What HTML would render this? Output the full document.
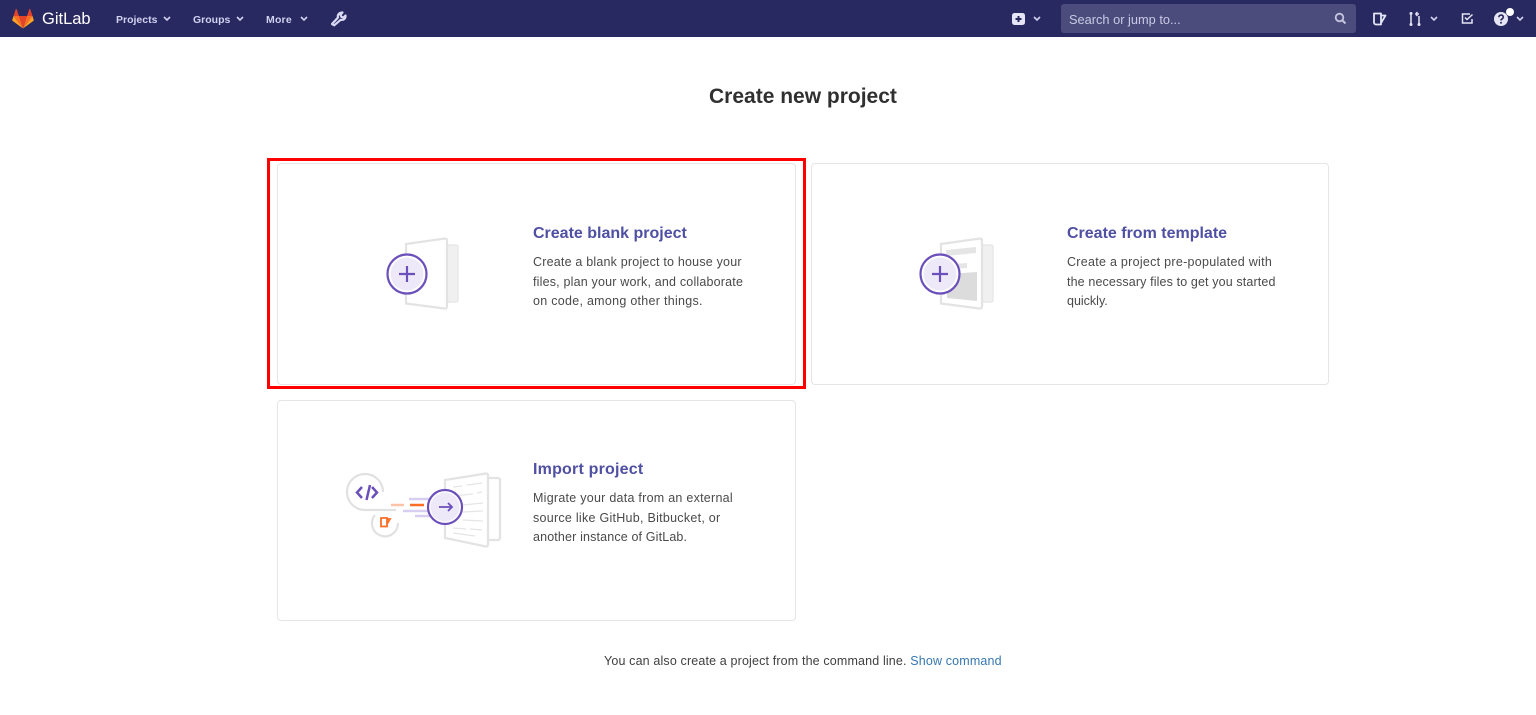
<!DOCTYPE html>
<html><head><meta charset="utf-8"><style>
html,body{margin:0;padding:0;width:1536px;height:715px;overflow:hidden;background:#fff;font-family:"Liberation Sans",sans-serif;color:#2e2e2e}
.a{position:absolute;white-space:nowrap}
#nav{position:absolute;left:0;top:0;width:1536px;height:37px;background:#292961}
.n{font-size:10.5px;font-weight:700;color:#d1d1f0;top:13px;line-height:14px}
.card{position:absolute;box-sizing:border-box;width:519px;height:222px;border:1px solid #e5e5e5;border-radius:4px;background:#fff}
.t{font-size:16px;font-weight:700;color:#4f4fa3;line-height:20px}
.d{font-size:12.5px;color:#4a4a4a;line-height:19.5px}
svg{position:absolute;overflow:visible}
</style></head><body>
<div id="nav"></div>
<svg style="left:12px;top:8px" width="22" height="21" viewBox="0 0 22 21"><path d="M11 20.5L15 8H7z" fill="#e24329"/><path d="M11 20.5L7 8H1.5z" fill="#fc6d26"/><path d="M1.5 8L.3 12c-.1.4 0 .7.3.9L11 20.5z" fill="#fca326"/><path d="M1.5 8H7L4.6 1c-.1-.4-.6-.4-.8 0z" fill="#e24329"/><path d="M11 20.5L15 8h5.5z" fill="#fc6d26"/><path d="M20.5 8l1.2 4c.1.4 0 .7-.3.9L11 20.5z" fill="#fca326"/><path d="M20.5 8H15l2.4-7c.1-.4.6-.4.8 0z" fill="#e24329"/></svg>
<div class="a" style="left:42px;top:10px;font-size:16.5px;line-height:18px;color:#fff">GitLab</div>
<div class="a n" style="left:116px">Projects</div>
<svg style="left:163px;top:16px" width="8" height="6"><path d="M1 1l3 3 3-3" fill="none" stroke="#d1d1f0" stroke-width="1.6"/></svg>
<div class="a n" style="left:193px">Groups</div>
<svg style="left:236px;top:16px" width="8" height="6"><path d="M1 1l3 3 3-3" fill="none" stroke="#d1d1f0" stroke-width="1.6"/></svg>
<div class="a n" style="left:266px;letter-spacing:.2px">More</div>
<svg style="left:300px;top:16px" width="8" height="6"><path d="M1 1l3 3 3-3" fill="none" stroke="#d1d1f0" stroke-width="1.6"/></svg>
<svg style="left:330px;top:11px" width="16" height="15" viewBox="0 0 16 15"><path d="M2 13l6-6.500c-.8-2.500 1-5 4.500-5l-2 2.500 1 2 2 .5 2-2c.3 3-2 5-4.800 4.300l-6.500 5.500z" fill="none" stroke="#d9d9f2" stroke-width="2.200" stroke-linejoin="round"/></svg>

<svg style="left:1012px;top:13px" width="13" height="12"><rect width="13" height="12" rx="2.500" fill="#e5e5f5"/><path d="M6.500 3v6M3.500 6h6" stroke="#292961" stroke-width="2"/></svg>
<svg style="left:1033px;top:16px" width="8" height="6"><path d="M1 1l3 3 3-3" fill="none" stroke="#d1d1f0" stroke-width="1.600"/></svg>
<div class="a" style="left:1061px;top:4px;width:295px;height:29px;background:#4c4c7c;border-radius:3px"></div>
<div class="a" style="left:1069px;top:12px;font-size:12.800px;line-height:16px;color:#c9c9e5">Search or jump to...</div>
<svg style="left:1334px;top:12px" width="13" height="13"><circle cx="5.500" cy="5.500" r="3.800" fill="none" stroke="#c4c4df" stroke-width="1.800"/><path d="M8.500 8.500l3 3" stroke="#c4c4df" stroke-width="2"/></svg>
<svg style="left:1373px;top:12px" width="14" height="14"><path d="M1 1.500h7v11H3a2 2 0 0 1-2-2zM8 3.500h4.500L8 11" fill="none" stroke="#e5e5f5" stroke-width="1.800" stroke-linejoin="round"/></svg>
<svg style="left:1408px;top:11px" width="16" height="16"><path d="M3 4v9M11 5v8M11 3H8" fill="none" stroke="#e5e5f5" stroke-width="1.500"/><path d="M7.500 3l2-2M7.500 3l2 2" stroke="#e5e5f5" stroke-width="1.300"/><circle cx="3" cy="2.500" r="1.500" fill="#e5e5f5"/><circle cx="3" cy="13.500" r="1.500" fill="#e5e5f5"/><circle cx="11" cy="13.500" r="1.500" fill="#e5e5f5"/></svg>
<svg style="left:1430px;top:16px" width="8" height="6"><path d="M1 1l3 3 3-3" fill="none" stroke="#d1d1f0" stroke-width="1.600"/></svg>
<svg style="left:1461px;top:12px" width="13" height="13"><path d="M11 7v4H1.500V2H9" fill="none" stroke="#e5e5f5" stroke-width="1.500"/><path d="M4 5.500l2 2L11.500 2.500" fill="none" stroke="#e5e5f5" stroke-width="1.500"/></svg>
<svg style="left:1493px;top:8px" width="22" height="20"><circle cx="8" cy="11" r="7" fill="#e5e5f5"/><path d="M5.800 9.300c0-3 4.500-3 4.500-.2 0 1.700-2.300 1.700-2.300 3.400" fill="none" stroke="#292961" stroke-width="1.600"/><circle cx="8" cy="14.700" r="1" fill="#292961"/><circle cx="17" cy="4" r="4" fill="#fff"/></svg>
<svg style="left:1516px;top:16px" width="8" height="6"><path d="M1 1l3 3 3-3" fill="none" stroke="#d1d1f0" stroke-width="1.600"/></svg>

<div class="a" style="left:709px;top:83px;font-size:21px;font-weight:700;line-height:28px;color:#303030">Create new project</div>

<div class="card" style="left:277px;top:163px"></div>
<div class="card" style="left:811px;top:163px;width:518px"></div>
<div class="card" style="left:277px;top:400px;height:221px"></div>
<div class="a" style="left:267px;top:158px;width:539px;height:231px;box-sizing:border-box;border:3px solid #f00"></div>

<svg style="left:370px;top:225px" width="110" height="95" viewBox="0 0 110 95">
<rect x="60" y="20" width="28" height="57" rx="2" fill="#f0f0f0" stroke="#e8e8e8" stroke-width="1.500"/>
<path d="M36 19L75 13.500Q77 13.500 77 15.500V81Q77 84 74.500 83.500L36 78.500z" fill="#fff" stroke="#e3e3e3" stroke-width="2.200"/>
<circle cx="37" cy="49" r="19.500" fill="#fff" stroke="#6b4fbb" stroke-width="2.200"/>
<circle cx="37" cy="49" r="16.500" fill="#eee9f9"/>
<path d="M37 41v16M29 49h16" stroke="#6b4fbb" stroke-width="2.200"/>
</svg>
<svg style="left:905px;top:225px" width="110" height="95" viewBox="0 0 110 95">
<rect x="60" y="20" width="28" height="57" rx="2" fill="#f0f0f0" stroke="#e8e8e8" stroke-width="1.500"/>
<path d="M36 19L75 13.500Q77 13.500 77 15.500V81Q77 84 74.500 83.500L36 78.500z" fill="#fff" stroke="#e3e3e3" stroke-width="2.200"/>
<path d="M41 25L71 22V28L41 31z" fill="#e5e5e5"/><path d="M50 39L62 38V43L50 44z" fill="#e5e5e5"/><path d="M42 49L72 47V76L42 73z" fill="#dcdcdc"/>
<circle cx="35" cy="49" r="19.500" fill="#fff" stroke="#6b4fbb" stroke-width="2.200"/>
<circle cx="35" cy="49" r="16.500" fill="#eee9f9"/>
<path d="M35 41v16M27 49h16" stroke="#6b4fbb" stroke-width="2.200"/>
</svg>
<svg style="left:335px;top:460px" width="180" height="95" viewBox="0 0 180 95">
<rect x="145" y="18" width="20" height="62" rx="2" fill="#fff" stroke="#e3e3e3" stroke-width="2.200"/>
<path d="M110 20L151 13.500Q153 13.500 153 15.500V84Q153 87 151 86.500L110 78z" fill="#fff" stroke="#e3e3e3" stroke-width="2.200"/>
<path d="M118 27l9-1M132 25l15-2M118 36l20-2M142 33l5-1M128 45l20-2M128 52l20-1M128 60l20 1M118 68l13 1M135 69l12 1M118 73l22 3" stroke="#e5e5e5" stroke-width="1.300" fill="none"/>
<path d="M61 50H30A18 18 0 1 1 48 32" fill="none" stroke="#e1e1e1" stroke-width="2.200"/>
<path d="M40 55A13 13 0 1 0 63 63" fill="none" stroke="#e1e1e1" stroke-width="2.200"/>
<path d="M27 27l-5 5.500 5 5.500M35 25l-3.500 15M37 27l5 5.500-5 5.500" fill="none" stroke="#6b4fbb" stroke-width="2.500"/>
<path d="M46 58h6v8.500h-6zM52 59h3l-3 5" fill="none" stroke="#fc6d26" stroke-width="1.800"/>
<path d="M56 45h13" stroke="#fdc4a8" stroke-width="2.500"/><path d="M75 45h14" stroke="#fc6d26" stroke-width="2.500"/>
<path d="M74 39h24M68 51h28M80 56h17" stroke="#d8cff0" stroke-width="2.500"/>
<circle cx="110" cy="47" r="17" fill="#fff" stroke="#6b4fbb" stroke-width="2.200"/>
<circle cx="110" cy="47" r="14.500" fill="#eee9f9"/>
<path d="M104 47h13M113 43l4 4-4 4" fill="none" stroke="#6b4fbb" stroke-width="1.800"/>
</svg>

<div class="a t" style="left:533px;top:224px">Create blank project</div>
<div class="a d" style="left:533px;top:253px"><div style="letter-spacing:.2px">Create a blank project to house your</div><div style="letter-spacing:.19px">files, plan your work, and collaborate</div><div style="letter-spacing:.28px">on code, among other things.</div></div>
<div class="a t" style="left:1067px;top:224px">Create from template</div>
<div class="a d" style="left:1067px;top:253px"><div style="letter-spacing:.28px">Create a project pre-populated with</div><div style="letter-spacing:.13px">the necessary files to get you started</div><div>quickly.</div></div>
<div class="a t" style="left:533px;top:460px;letter-spacing:.2px">Import project</div>
<div class="a d" style="left:533px;top:489px"><div style="letter-spacing:.26px">Migrate your data from an external</div><div style="letter-spacing:.27px">source like GitHub, Bitbucket, or</div><div style="letter-spacing:.15px">another instance of GitLab.</div></div>
<div class="a" style="left:604px;top:653px;font-size:12.500px;line-height:16px;color:#404040;letter-spacing:.15px">You can also create a project from the command line. <span style="color:#3777b0">Show command</span></div>
</body></html>
